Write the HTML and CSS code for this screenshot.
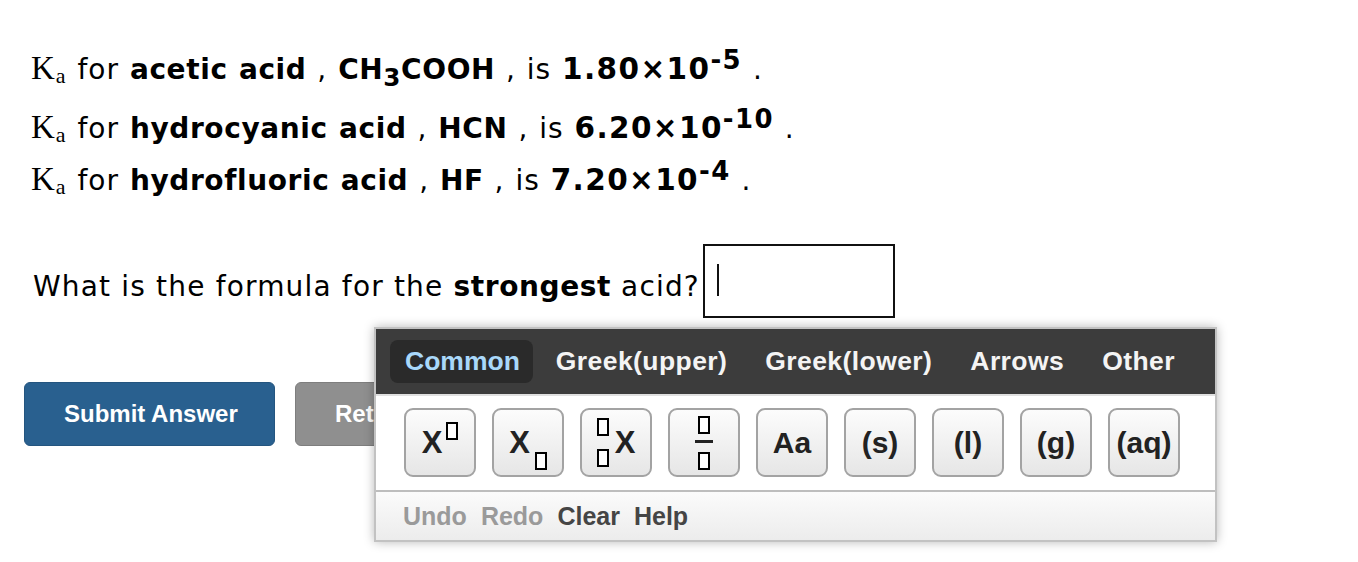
FILE: index.html
```html
<!DOCTYPE html>
<html>
<head>
<meta charset="utf-8">
<link rel="stylesheet" href="styles.css">
</head>
<body>
<div class="content">
  <p class="line first"><span class="ka">K<span class="ka-sub">a</span></span> for <b>acetic acid</b> , <b>CH<sub>3</sub>COOH</b> , is <b class="num">1.80×10<sup>-5</sup></b> .</p>
  <p class="line"><span class="ka">K<span class="ka-sub">a</span></span> for <b>hydrocyanic acid</b> , <b>HCN</b> , is <b class="num">6.20×10<sup>-10</sup></b> .</p>
  <p class="line"><span class="ka">K<span class="ka-sub">a</span></span> for <b>hydrofluoric acid</b> , <b>HF</b> , is <b class="num">7.20×10<sup>-4</sup></b> .</p>

  <div class="question">What is the formula for the <b>strongest</b> acid?<div class="answer"><div class="caret"></div></div></div>

  <div class="actions">
    <div class="btn submit">Submit Answer</div>
    <div class="btn retry">Retry</div>
  </div>
</div>

<div class="palette">
  <div class="tabs">
    <div class="tab active">Common</div>
    <div class="tab">Greek(upper)</div>
    <div class="tab">Greek(lower)</div>
    <div class="tab">Arrows</div>
    <div class="tab">Other</div>
  </div>
  <div class="keys">
    <div class="key"><span class="kx">X</span><span class="slot sup-slot"></span></div>
    <div class="key"><span class="kx">X</span><span class="slot sub-slot"></span></div>
    <div class="key"><span class="stack"><span class="slot"></span><span class="slot"></span></span><span class="kx">X</span></div>
    <div class="key"><span class="frac"><span class="slot"></span><span class="bar"></span><span class="slot"></span></span></div>
    <div class="key">Aa</div>
    <div class="key">(s)</div>
    <div class="key">(l)</div>
    <div class="key">(g)</div>
    <div class="key">(aq)</div>
  </div>
  <div class="footer">
    <span class="off">Undo</span>
    <span class="off">Redo</span>
    <span class="on">Clear</span>
    <span class="on">Help</span>
  </div>
</div>
</body>
</html>
```

FILE: styles.css
```css
html, body {
  margin: 0;
  padding: 0;
  background: #fff;
}
body {
  font-family: "DejaVu Sans", Verdana, sans-serif;
  font-size: 28px;
  color: #000;
}
.content {
  padding: 44px 0 0 33px;
}
.line {
  margin: 0;
  line-height: 52px;
  white-space: nowrap;
  letter-spacing: 1px;
  word-spacing: 1px;
}
.line.first {
  margin-bottom: 7px;
}
.line b,
.question b {
  font-weight: bold;
  letter-spacing: 0.6px;
}
.line b.num {
  font-size: 29.5px;
  letter-spacing: 1.4px;
  line-height: 0;
}
sub, sup {
  font-size: 0.88em;
  line-height: 0;
}
sup {
  vertical-align: 10px;
}
sub {
  vertical-align: -7px;
}
.ka {
  font-family: "Liberation Serif", "Times New Roman", serif;
  font-size: 33px;
  line-height: 0;
  letter-spacing: 0;
  margin-left: -2px;
  margin-right: 1px;
}
.ka-sub {
  font-size: 22px;
  vertical-align: -4px;
  line-height: 0;
  margin-left: 1px;
}
.question {
  margin-top: 37px;
  line-height: 30px;
  white-space: nowrap;
  letter-spacing: 1.17px;
}
.answer {
  display: inline-block;
  overflow: hidden;
  width: 188px;
  height: 70px;
  border: 2px solid #111;
  vertical-align: -22px;
  margin-left: 3px;
  box-sizing: content-box;
}
.caret {
  width: 2px;
  height: 32px;
  background: #111;
  margin: 18px 0 0 12px;
}
.actions {
  display: flex;
  margin: 64px 0 0 -9px;
  gap: 20px;
}
.btn {
  height: 64px;
  box-sizing: border-box;
  border-radius: 6px;
  font-family: "Liberation Sans", Arial, sans-serif;
  font-weight: bold;
  font-size: 24px;
  color: #fff;
  display: flex;
  align-items: center;
  padding: 0 38px 0 39px;
  white-space: nowrap;
}
.submit {
  width: 251px;
  background: #29608f;
  border: 1px solid #24557f;
}
.retry {
  background: #8f8f8f;
  border: 1px solid #7e7e7e;
}

/* palette overlay */
.palette {
  position: absolute;
  left: 374px;
  top: 327px;
  width: 839px;
  border: 2px solid #c2c2c2;
  box-shadow: 0 0 10px rgba(0, 0, 0, 0.28);
  background: #fff;
  font-family: "Liberation Sans", Arial, sans-serif;
  font-weight: bold;
}
.tabs {
  background: #3c3c3c;
  display: flex;
  gap: 8px;
  padding: 11px 14px;
  border-bottom: 2px solid #e0e0e0;
}
.tab {
  height: 43px;
  line-height: 43px;
  padding: 0 15px;
  font-size: 26.5px;
  letter-spacing: 0.42px;
  color: #f4f4f4;
  border-radius: 8px;
}
.tab.active {
  background: #2a2a2a;
  color: #a9d8fa;
  letter-spacing: 0;
  padding-right: 13px;
}
.keys {
  display: flex;
  gap: 16px;
  padding: 12px 0 13px 28px;
  border-bottom: 2px solid #bdbdbd;
}
.key {
  width: 72px;
  height: 69px;
  box-sizing: border-box;
  border: 2px solid #a3a3a3;
  border-radius: 9px;
  background: linear-gradient(#fcfcfc, #e6e6e6);
  display: flex;
  align-items: center;
  justify-content: center;
  font-size: 30px;
  color: #222;
}
.kx {
  font-size: 31px;
  line-height: 1;
}
.slot {
  display: block;
  width: 12px;
  height: 18px;
  box-sizing: border-box;
  border: 2px solid #000;
  background: #fff;
}
.sup-slot {
  align-self: flex-start;
  margin: 12px 0 0 4px;
}
.sub-slot {
  align-self: flex-end;
  margin: 0 0 5px 5px;
}
.stack {
  display: flex;
  flex-direction: column;
  gap: 13px;
  margin-right: 6px;
}
.frac {
  display: flex;
  flex-direction: column;
  align-items: center;
}
.bar {
  display: block;
  width: 18px;
  height: 3px;
  background: #222;
  margin: 6px 0 9px;
}
.footer {
  height: 48px;
  display: flex;
  align-items: center;
  gap: 14px;
  padding-left: 27px;
  background: linear-gradient(#fbfbfb, #ececec);
  font-size: 25px;
}
.off {
  color: #9a9a9a;
}
.on {
  color: #454545;
}
```
